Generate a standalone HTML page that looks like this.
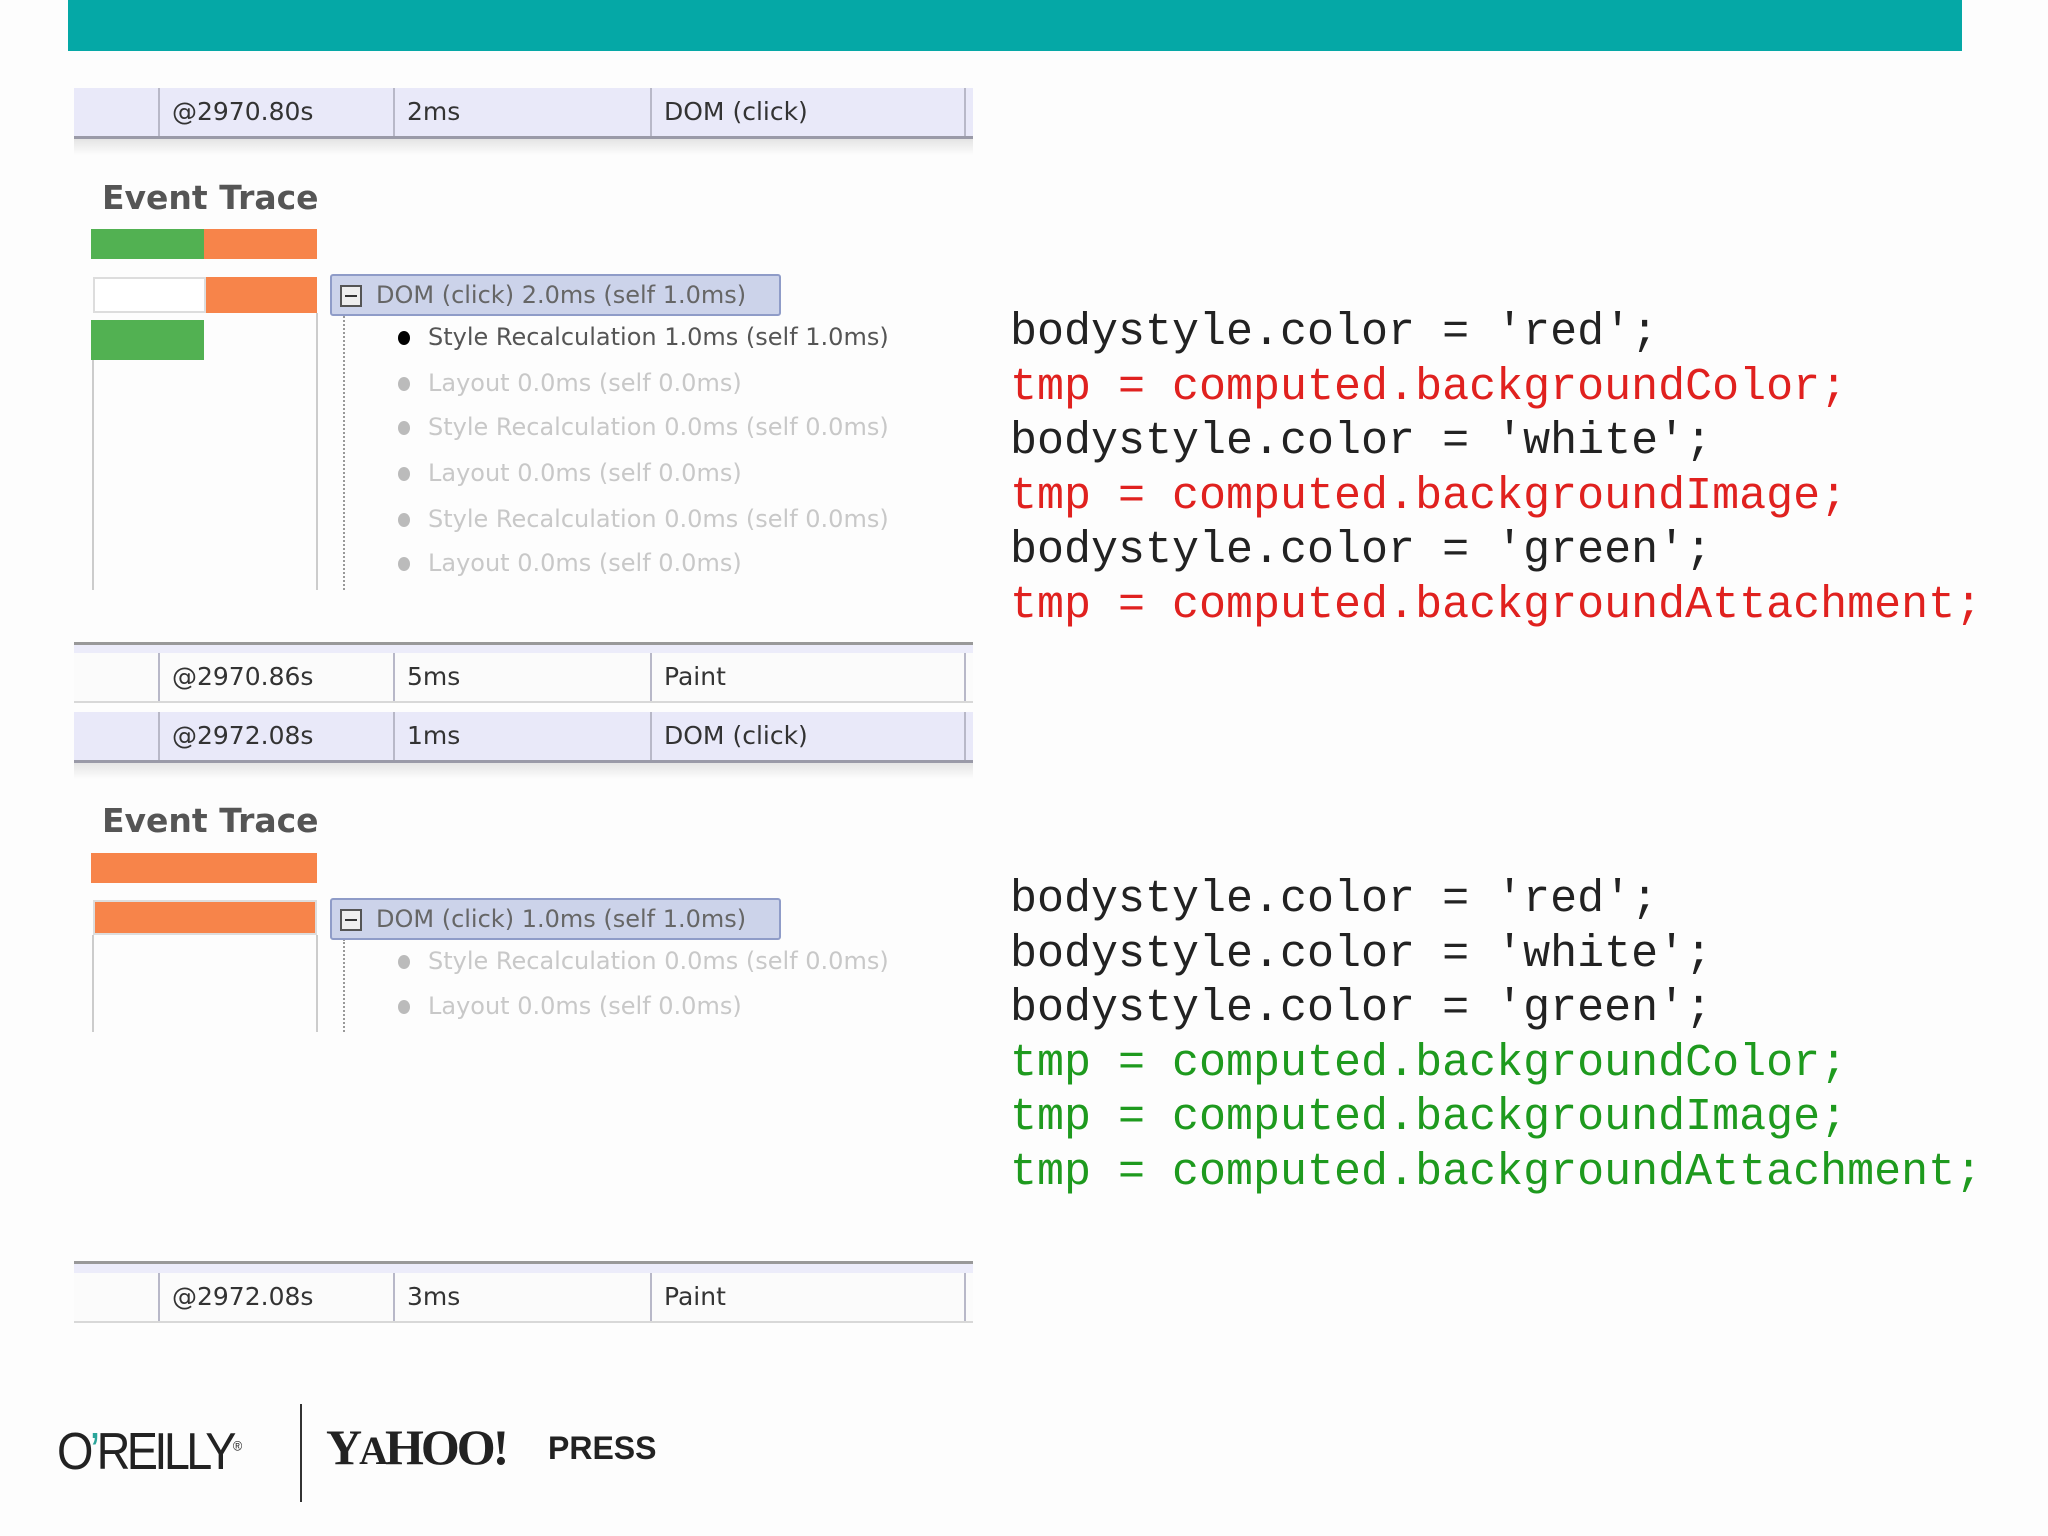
<!DOCTYPE html>
<html><head><meta charset="utf-8"><style>
body{margin:0;width:2048px;height:1536px;background:#fdfdfd;position:relative;overflow:hidden;font-family:"DejaVu Sans","Liberation Sans",sans-serif}
.a{position:absolute}
.row{position:absolute;left:74px;width:899px;height:48px;font-size:25px;color:#333}
.row .c{position:absolute;top:0;height:100%;border-left:2px solid #b8b8c8;line-height:48px;padding-left:12px;box-sizing:border-box}
.lav{background:#e9e9f9;border-bottom:3px solid #9a9aa8}
.wh{background:#fbfbfb;border-bottom:2px solid #d8d8d8}
.et{font-size:33px;font-weight:bold;color:#555;left:102px}
.item{position:absolute;left:398px;font-size:24px;color:#c8c8c8;white-space:nowrap}
.item:before{content:"";display:inline-block;width:12px;height:14px;border-radius:50%;background:#bbb;margin-right:18px;vertical-align:middle}
.item.on{color:#555}.item.on:before{background:#000}
.dom{position:absolute;left:330px;width:451px;height:42px;background:#ccd3ea;border:2px solid #8f9cc8;box-sizing:border-box;border-radius:3px;font-size:24px;color:#666;line-height:38px;padding-left:44px;white-space:nowrap}
.dom:before{content:"";position:absolute;left:8px;top:9px;width:18px;height:18px;border:2px solid #555;background:#eee}
.dom:after{content:"";position:absolute;left:13px;top:19px;width:12px;height:2px;background:#333}
.code{position:absolute;left:1010px;font-family:"Liberation Mono",monospace;font-size:45px;line-height:54.6px;white-space:pre;color:#222}
.r{color:#e0211f}.g{color:#1e9a1e}
</style></head><body>
<div class="a" style="left:68px;top:0;width:1894px;height:51px;background:#05a8a6"></div>

<div class="row lav" style="top:88px"><div class="c" style="left:84px;width:235px">@2970.80s</div><div class="c" style="left:319px;width:257px">2ms</div><div class="c" style="left:576px;width:314px">DOM (click)</div><div class="c" style="left:890px;width:9px;padding:0"></div></div>
<div class="a" style="left:74px;top:139px;width:899px;height:16px;background:linear-gradient(#e4e4e4,#fdfdfd)"></div>

<div class="a et" style="top:178px">Event Trace</div>
<div class="a" style="left:91px;top:229px;width:113px;height:30px;background:#52b152"></div>
<div class="a" style="left:204px;top:229px;width:113px;height:30px;background:#f7844a"></div>
<div class="a" style="left:93px;top:277px;width:113px;height:36px;background:#fff;border:2px solid #ddd;box-sizing:border-box"></div>
<div class="a" style="left:206px;top:277px;width:111px;height:36px;background:#f7844a"></div>
<div class="a" style="left:91px;top:320px;width:113px;height:40px;background:#52b152"></div>
<div class="a" style="left:92px;top:360px;width:2px;height:230px;background:#ccc"></div>
<div class="a" style="left:316px;top:313px;width:2px;height:277px;background:#ccc"></div>
<div class="a" style="left:343px;top:316px;height:274px;border-left:2px dotted #999"></div>
<div class="dom" style="top:274px">DOM (click) 2.0ms (self 1.0ms)</div>
<div class="item on" style="top:323px">Style Recalculation 1.0ms (self 1.0ms)</div>
<div class="item" style="top:369px">Layout 0.0ms (self 0.0ms)</div>
<div class="item" style="top:413px">Style Recalculation 0.0ms (self 0.0ms)</div>
<div class="item" style="top:459px">Layout 0.0ms (self 0.0ms)</div>
<div class="item" style="top:505px">Style Recalculation 0.0ms (self 0.0ms)</div>
<div class="item" style="top:549px">Layout 0.0ms (self 0.0ms)</div>

<div class="a" style="left:74px;top:642px;width:899px;height:3px;background:#999"></div>
<div class="a" style="left:74px;top:645px;width:899px;height:8px;background:#ececfa"></div>
<div class="row wh" style="top:653px"><div class="c" style="left:84px;width:235px">@2970.86s</div><div class="c" style="left:319px;width:257px">5ms</div><div class="c" style="left:576px;width:314px">Paint</div><div class="c" style="left:890px;width:9px;padding:0"></div></div>
<div class="row lav" style="top:712px"><div class="c" style="left:84px;width:235px">@2972.08s</div><div class="c" style="left:319px;width:257px">1ms</div><div class="c" style="left:576px;width:314px">DOM (click)</div><div class="c" style="left:890px;width:9px;padding:0"></div></div>
<div class="a" style="left:74px;top:763px;width:899px;height:16px;background:linear-gradient(#e4e4e4,#fdfdfd)"></div>

<div class="a et" style="top:801px">Event Trace</div>
<div class="a" style="left:91px;top:853px;width:226px;height:30px;background:#f7844a"></div>
<div class="a" style="left:93px;top:900px;width:224px;height:35px;background:#f7844a;border:2px solid #ddd;box-sizing:border-box"></div>
<div class="a" style="left:92px;top:935px;width:2px;height:97px;background:#ccc"></div>
<div class="a" style="left:316px;top:935px;width:2px;height:97px;background:#ccc"></div>
<div class="a" style="left:343px;top:939px;height:93px;border-left:2px dotted #999"></div>
<div class="dom" style="top:898px">DOM (click) 1.0ms (self 1.0ms)</div>
<div class="item" style="top:947px">Style Recalculation 0.0ms (self 0.0ms)</div>
<div class="item" style="top:992px">Layout 0.0ms (self 0.0ms)</div>

<div class="a" style="left:74px;top:1261px;width:899px;height:3px;background:#999"></div>
<div class="a" style="left:74px;top:1264px;width:899px;height:9px;background:#ececfa"></div>
<div class="row wh" style="top:1273px"><div class="c" style="left:84px;width:235px">@2972.08s</div><div class="c" style="left:319px;width:257px">3ms</div><div class="c" style="left:576px;width:314px">Paint</div><div class="c" style="left:890px;width:9px;padding:0"></div></div>

<div class="code" style="top:306px">bodystyle.color = 'red';
<span class="r">tmp = computed.backgroundColor;</span>
bodystyle.color = 'white';
<span class="r">tmp = computed.backgroundImage;</span>
bodystyle.color = 'green';
<span class="r">tmp = computed.backgroundAttachment;</span></div>

<div class="code" style="top:873px">bodystyle.color = 'red';
bodystyle.color = 'white';
bodystyle.color = 'green';
<span class="g">tmp = computed.backgroundColor;</span>
<span class="g">tmp = computed.backgroundImage;</span>
<span class="g">tmp = computed.backgroundAttachment;</span></div>

<div class="a" style="left:57px;top:1422px;font-size:52px;color:#222;letter-spacing:-4px;font-family:'Liberation Sans',sans-serif;transform:scaleX(0.9);transform-origin:left">O<span style="color:#2aa59a">’</span>REILLY<sup style="font-size:14px">®</sup></div>
<div class="a" style="left:300px;top:1404px;width:2px;height:98px;background:#333"></div>
<div class="a" style="left:326px;top:1418px;font-size:50px;font-weight:bold;color:#222;font-family:'Liberation Serif',serif;letter-spacing:-3px">Y<span style="font-size:40px">A</span>HOO!</div>
<div class="a" style="left:548px;top:1430px;font-size:32px;font-weight:bold;color:#222;font-family:'Liberation Sans',sans-serif">PRESS</div>
</body></html>
